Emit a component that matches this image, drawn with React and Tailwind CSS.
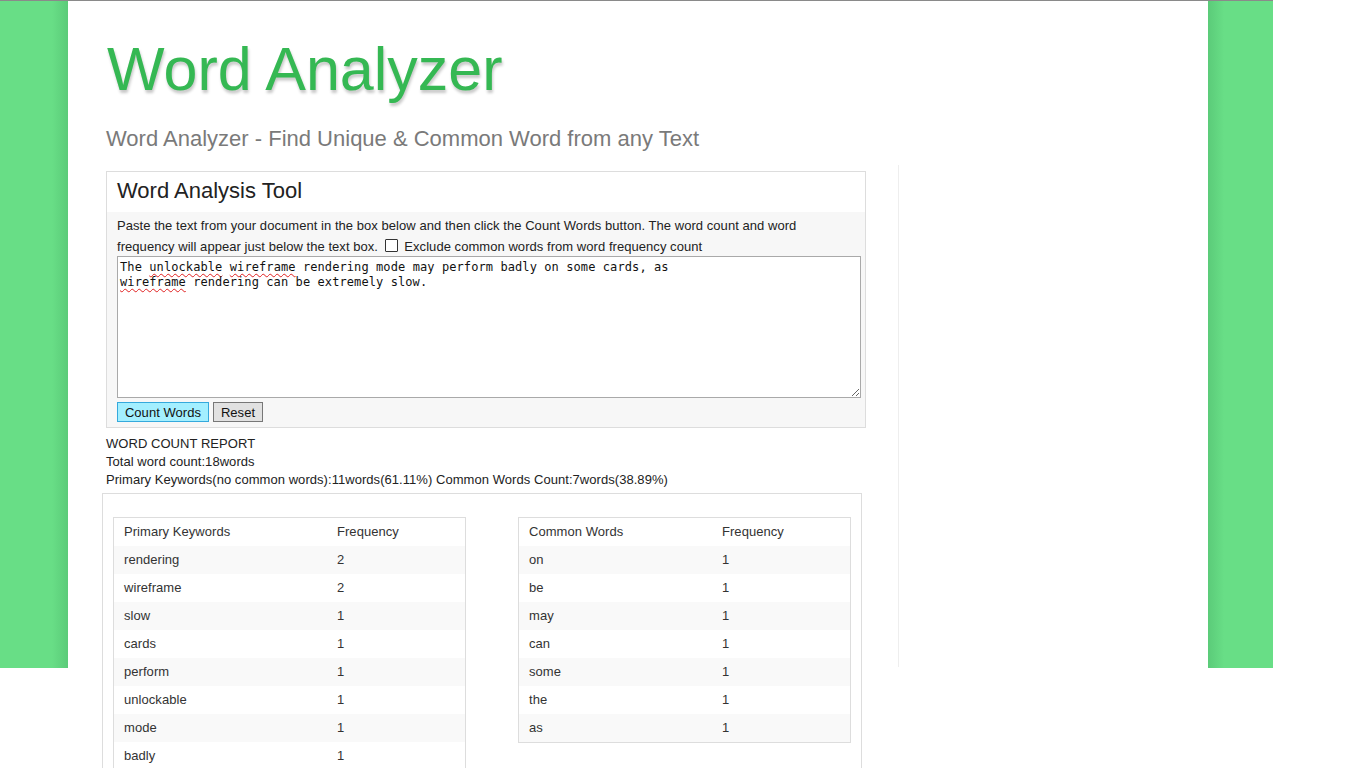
const PRIMARY = [
  ['rendering', 2],
  ['wireframe', 2],
  ['slow', 1],
  ['cards', 1],
  ['perform', 1],
  ['unlockable', 1],
  ['mode', 1],
  ['badly', 1],
  ['extremely', 1],
  ['extremely', 1],
]

const COMMON = [
  ['on', 1],
  ['be', 1],
  ['may', 1],
  ['can', 1],
  ['some', 1],
  ['the', 1],
  ['as', 1],
]

function FreqTable({ title, rows, firstCol, width }) {
  return (
    <div className={`${width} border border-[#ddd] self-start`}>
      <div className="flex h-[28px] items-center bg-white">
        <div className={`${firstCol} pl-[10px]`}>{title}</div>
        <div>Frequency</div>
      </div>
      {rows.map(([word, n], i) => (
        <div
          key={i}
          className={`flex h-[28px] items-center ${i % 2 === 0 ? 'bg-[#f9f9f9]' : 'bg-white'}`}
        >
          <div className={`${firstCol} pl-[10px]`}>{word}</div>
          <div>{n}</div>
        </div>
      ))}
    </div>
  )
}

function Misspelled({ children }) {
  return (
    <span className="underline decoration-wavy decoration-[#e02020] decoration-[1px] underline-offset-[2px]">
      {children}
    </span>
  )
}

export default function App() {
  return (
    <div className="h-[768px] w-[1366px] overflow-hidden bg-white font-['Liberation_Sans',Arial,sans-serif] text-[13px] tracking-[0.05px] text-[#333]">
      <div className="w-[1273px] border-t border-[#8a8a8a] flex items-start">
        {/* left green edge */}
        <div className="w-[68px] h-[667px] bg-[linear-gradient(to_left,#5bcb79,#68de86_16px)]" />

        {/* page body */}
        <div className="w-[1140px] bg-white pl-[38px]">
          <h1 className="mt-[38px] ml-px text-[61px] leading-[60px] tracking-normal text-[#35b853] [text-shadow:1px_3px_3px_rgba(0,0,0,0.22)]">
            Word Analyzer
          </h1>
          <h2 className="mt-[29px] text-[22px] leading-[22px] tracking-normal text-[#7a7a7a]">
            Word Analyzer - Find Unique &amp; Common Word from any Text
          </h2>

          <div className="mt-[15px] flex items-start">
            {/* main column */}
            <div className="w-[792px] pt-[6px]">
              {/* tool panel */}
              <div className="w-[760px] border border-[#ddd]">
                <div className="h-[40px] bg-white pl-[10px] pt-[8px] text-[22px] leading-[22px] tracking-normal text-[#222]">
                  Word Analysis Tool
                </div>
                <div className="bg-[#f7f7f7] pl-[10px] pr-[4px] pb-[5px] pt-[3px]">
                  <p className="leading-[21px] text-[#222]">
                    Paste the text from your document in the box below and then click the Count Words button. The word count and word
                    <br />
                    frequency will appear just below the text box.{' '}
                    <input
                      type="checkbox"
                      className="appearance-none w-[13px] h-[13px] border border-[#333] bg-white rounded-[1px] align-[-1px] ml-[3px] mr-[3px]"
                    />{' '}
                    Exclude common words from word frequency count
                  </p>
                  <div className="-mt-px w-[744px] h-[142px] border border-[#a9a9a9] bg-white pl-[2px] pt-[3px] font-['DejaVu_Sans_Mono',monospace] text-[12px] leading-[15px] tracking-[0.09px] text-[#111] overflow-auto resize whitespace-pre">
                    {'The '}
                    <Misspelled>unlockable</Misspelled>{' '}
                    <Misspelled>wireframe</Misspelled>
                    {' rendering mode may perform badly on some cards, as\n'}
                    <Misspelled>wireframe</Misspelled>
                    {' rendering can be extremely slow.'}
                  </div>
                  <div className="mt-[4px] flex gap-[4px]">
                    <button className="h-[20px] w-[92px] border border-[#35a9dc] bg-[#a3efff] pt-px text-[13px] leading-[17px] text-[#111]">
                      Count Words
                    </button>
                    <button className="h-[20px] w-[50px] border border-[#777] bg-[#e1e1e1] pt-px text-[13px] leading-[17px] text-[#111]">
                      Reset
                    </button>
                  </div>
                </div>
              </div>

              {/* report */}
              <div className="mt-[7px] leading-[18px] text-[#222]">
                <div>WORD COUNT REPORT</div>
                <div>Total word count:18words</div>
                <div>
                  Primary Keywords(no common words):11words(61.11%) Common Words Count:7words(38.89%)
                </div>
              </div>

              {/* results */}
              <div className="mt-[4px] -ml-[4px] w-[760px] h-[300px] border border-[#ddd] px-[10px] pt-[23px] flex gap-[52px]">
                <FreqTable title="Primary Keywords" rows={PRIMARY} firstCol="w-[223px]" width="w-[353px]" />
                <FreqTable title="Common Words" rows={COMMON} firstCol="w-[203px]" width="w-[333px]" />
              </div>
            </div>

            {/* sidebar */}
            <div className="h-[502px] w-[240px] border-l border-[#eee]" />
          </div>
        </div>

        {/* right green edge */}
        <div className="w-[65px] h-[667px] bg-[linear-gradient(to_right,#5bcb79,#68de86_16px)]" />
      </div>
    </div>
  )
}
